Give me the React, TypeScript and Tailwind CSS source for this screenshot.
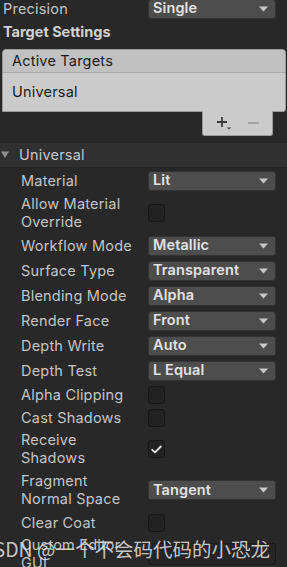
import React from "react";

const font = { fontFamily: "Inter, 'Noto Sans', sans-serif" } as const;

function Arrow() {
  return (
    <svg width="9" height="6" viewBox="0 0 9 6">
      <path d="M0 0.5 H9 L4.5 5.5 Z" fill="#c8c8c8" />
    </svg>
  );
}

function Dropdown({ value }: { value: string }) {
  return (
    <div className="flex h-[20px] w-[128px] shrink-0 items-center justify-between rounded-[3px] border border-[#333333] bg-[#4d4d4d] pl-[4px] pr-[7px]">
      <span className="text-[14.5px] font-semibold leading-none tracking-[0.1px] text-[#e2e2e2]">{value}</span>
      <Arrow />
    </div>
  );
}

function Checkbox({ checked }: { checked?: boolean }) {
  return (
    <div className="flex h-[18px] w-[17px] shrink-0 items-center justify-center rounded-[3px] border border-[#171717] bg-[#222222]">
      {checked && (
        <svg width="11" height="9" viewBox="0 0 11 9">
          <path d="M1.2 4.8 L4 7.3 L9.8 1.5" stroke="#e8e8e8" strokeWidth="1.8" fill="none" strokeLinecap="round" strokeLinejoin="round" />
        </svg>
      )}
    </div>
  );
}

function Row({ label, h, children }: { label: React.ReactNode; h: string; children: React.ReactNode }) {
  return (
    <div className={`flex items-center pl-[21px] ${h}`}>
      <div className="w-[127px] shrink-0 text-[14.5px] leading-[18px] tracking-[0.2px] text-[#c4c4c4]">{label}</div>
      {children}
    </div>
  );
}

export default function App() {
  return (
    <div className="relative h-[567px] w-[287px] overflow-hidden bg-[#282828]" style={font}>
      {/* Precision */}
      <div className="-mt-[2px] flex h-[21px] items-center pl-[3px]">
        <div className="w-[145px] text-[14.5px] leading-[18px] tracking-[0.2px] text-[#c4c4c4]">Precision</div>
        <Dropdown value="Single" />
      </div>
      {/* Target Settings */}
      <div className="mt-[3px] flex h-[20px] items-center pl-[3px] text-[14.5px] font-bold leading-[18px] text-[#d2d2d2]">Target Settings</div>
      {/* List */}
      <div className="mt-[7px] ml-[2px] mr-[1px]">
        <div className="overflow-hidden rounded-t-[4px] rounded-br-[3px] border border-[#9a9a9a] bg-[#cbcbcb]">
          <div className="flex h-[23px] items-center border-b border-[#a9a9a9] bg-[#c1c1c1] pl-[9px] text-[14.5px] tracking-[0.2px] text-[#1c1c1c]">
            Active Targets
          </div>
          <div className="flex h-[38px] items-center pl-[9px] text-[14.5px] tracking-[0.2px] text-[#1c1c1c]">Universal</div>
        </div>
        <div className="ml-[200px] -mt-[1px] flex h-[25px] w-[71px] items-center rounded-b-[3px] border border-t-0 border-[#9a9a9a] bg-[#cbcbcb] pl-[13px]">
          <svg width="20" height="16" viewBox="0 0 20 16">
            <path d="M6 2 V12 M1 7 H11" stroke="#3a3a3a" strokeWidth="1.8" />
            <path d="M11 12.5 H15 L13 14.5 Z" fill="#3a3a3a" />
          </svg>
          <svg className="ml-[12px]" width="11" height="4" viewBox="0 0 11 4">
            <path d="M0 2 H11" stroke="#9c9c9c" strokeWidth="1.6" />
          </svg>
        </div>
      </div>
      {/* Foldout header */}
      <div className="mt-[6px] flex h-[25px] items-center border-t border-[#232323] bg-[#303030]">
        <svg className="ml-[1px]" width="9" height="8" viewBox="0 0 9 8">
          <path d="M0 0.5 H8 L4 7 Z" fill="#8f8f8f" />
        </svg>
        <span className="ml-[9px] text-[14.5px] tracking-[0.2px] text-[#c4c4c4]">Universal</span>
      </div>
      <div className="h-[1px]" />
      <Row label="Material" h="h-[25px]"><Dropdown value="Lit" /></Row>
      <Row label={<>Allow Material<br />Override</>} h="h-[40px]"><Checkbox /></Row>
      <Row label="Workflow Mode" h="h-[25px]"><Dropdown value="Metallic" /></Row>
      <Row label="Surface Type" h="h-[25px]"><Dropdown value="Transparent" /></Row>
      <Row label="Blending Mode" h="h-[25px]"><Dropdown value="Alpha" /></Row>
      <Row label="Render Face" h="h-[25px]"><Dropdown value="Front" /></Row>
      <Row label="Depth Write" h="h-[25px]"><Dropdown value="Auto" /></Row>
      <Row label="Depth Test" h="h-[25px]"><Dropdown value="L Equal" /></Row>
      <Row label="Alpha Clipping" h="h-[23px]"><Checkbox /></Row>
      <Row label="Cast Shadows" h="h-[23px]"><Checkbox /></Row>
      <Row label={<>Receive<br />Shadows</>} h="h-[40px]"><Checkbox checked /></Row>
      <Row label={<>Fragment<br />Normal Space</>} h="h-[42px]"><Dropdown value="Tangent" /></Row>
      <Row label="Clear Coat" h="h-[23px]"><Checkbox /></Row>
      <Row label={<>Custom Editor<br />GUI</>} h="h-[40px]">
        <div className="h-[22px] w-[128px] shrink-0 rounded-[3px] border border-[#1b1b1b] bg-[#252525]" />
      </Row>
      {/* watermark */}
      <div
        className="pointer-events-none absolute right-[17px] top-[536px] whitespace-nowrap text-[19.5px] leading-[26px] text-[#dcdcdc]/90"
        style={{ fontFamily: "'Noto Sans CJK SC', 'Noto Sans', sans-serif" }}
      >
        CSDN @一个不会码代码的小恐龙
      </div>
    </div>
  );
}
